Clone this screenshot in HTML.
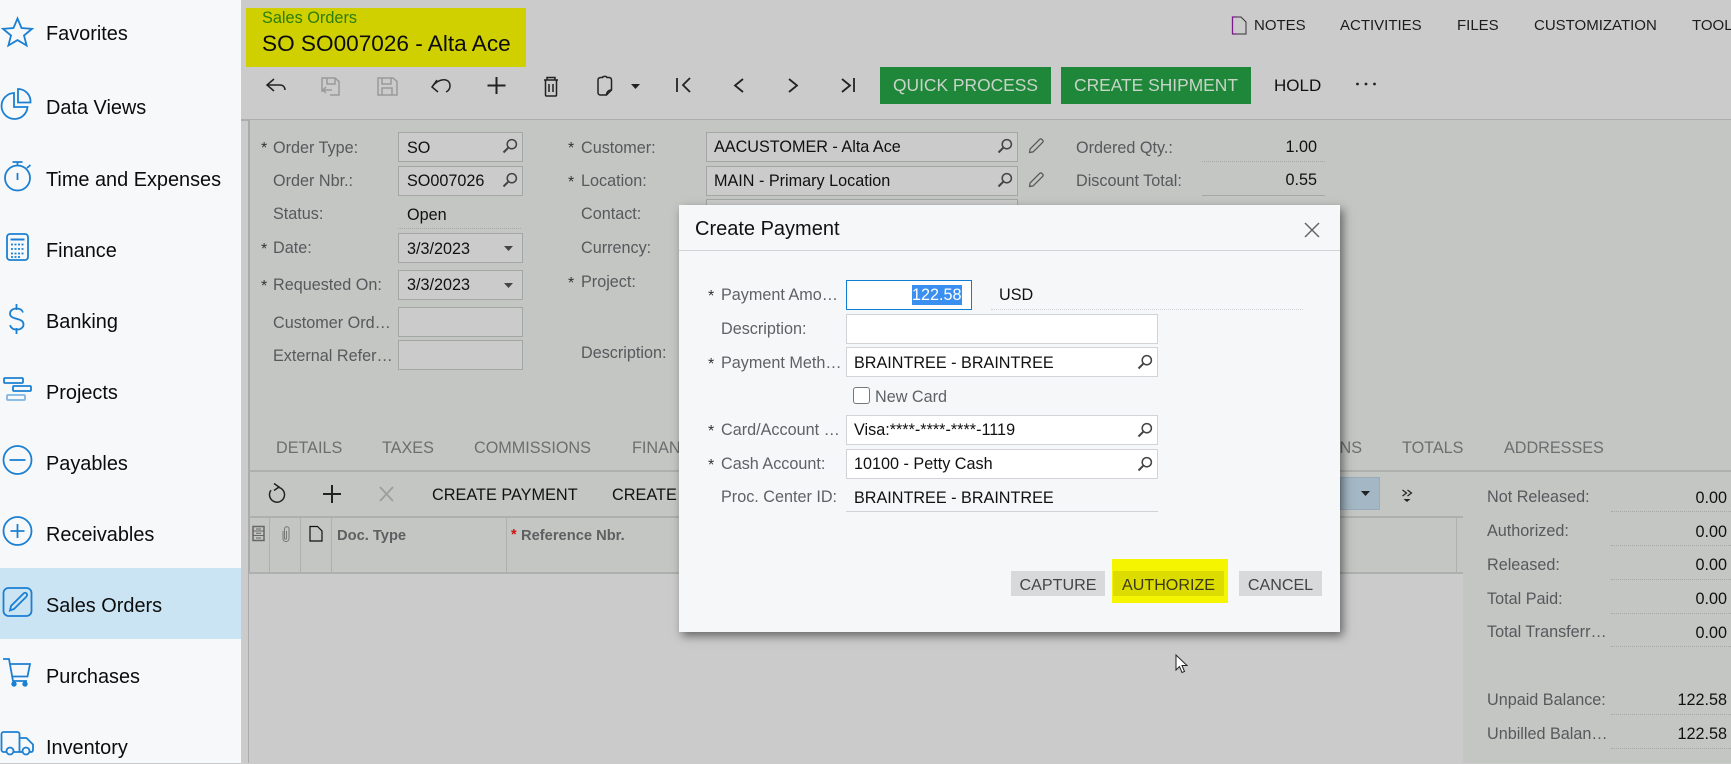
<!DOCTYPE html>
<html><head><meta charset="utf-8"><title>Sales Orders</title>
<style>
html,body{margin:0;padding:0}
body{width:1731px;height:763px;overflow:hidden;position:relative;background:#cbcbcb;font-family:"Liberation Sans",sans-serif;font-size:16.2px;color:#111}
.a{position:absolute}
.t{position:absolute;white-space:nowrap;line-height:20px;height:20px;margin-top:.5px}
.l{color:#56595b}
.s{color:#333;font-size:16px}
.t.n{font-size:19.9px;left:46px;color:#0c0c0c;margin-top:1.5px}
.t.top{font-size:15px;color:#1c1c1c;margin-top:1.5px}
.i{position:absolute;box-sizing:border-box;border:1.5px solid #a4a6a6;background:#cbcbcb;height:30px}
.d{position:absolute;box-sizing:border-box;border:1.5px solid #d2d3d6;background:#fff;height:30px}
.dot{position:absolute;border-top:1px dotted #a6a8a8;height:0}
.sol{position:absolute;border-top:1.5px solid #a6a8a8;height:0}
.tab{color:#6c6f6f;font-size:16.2px}
.r{text-align:right}
.btn{position:absolute;background:#d8d9da;color:#444;font-size:16.1px;text-align:center;line-height:28px;height:25px}
.g{position:absolute;background:#1f873a;color:#c8d4c8;font-size:17.4px;line-height:37px;height:37px;text-align:center}
svg{position:absolute;overflow:visible}
.ic{fill:none;stroke:#1b80d2;stroke-width:1.8}
.tb{fill:none;stroke:#222;stroke-width:1.5}
.dis{fill:none;stroke:#9a9a9a;stroke-width:1.5}
</style></head><body>
<svg width="0" height="0" style="position:absolute"><defs>
<symbol id="sr" viewBox="0 0 16 16"><circle cx="9.8" cy="6.2" r="4.6" fill="none" stroke="#444" stroke-width="1.5"/><path d="M6.4 9.6L1.5 14.5" stroke="#444" stroke-width="2" fill="none"/></symbol>
<symbol id="pen" viewBox="0 0 16 16"><path d="M1.5 14.5l.6-3.6L11.6 1.4c.7-.7 1.6-.7 2.3 0l.7.7c.7.7.7 1.6 0 2.3L5.1 13.9z" fill="none" stroke="#555" stroke-width="1.2"/></symbol>
</defs></svg>

<!-- sidebar -->
<div class="a" style="left:0;top:0;width:241px;height:763px;background:#f7f8fa"></div>
<div class="a" style="left:0;top:568px;width:241px;height:71px;background:#cbe4f4"></div>
<div class="t n" style="top:22px">Favorites</div>
<div class="t n" style="top:96.500px">Data Views</div>
<div class="t n" style="top:168px">Time and Expenses</div>
<div class="t n" style="top:239px">Finance</div>
<div class="t n" style="top:310px">Banking</div>
<div class="t n" style="top:381px">Projects</div>
<div class="t n" style="top:452px">Payables</div>
<div class="t n" style="top:523px">Receivables</div>
<div class="t n" style="top:594px">Sales Orders</div>
<div class="t n" style="top:665px">Purchases</div>
<div class="t n" style="top:736px">Inventory</div>
<svg width="241" height="763" style="left:0;top:0">
<g class="ic">
<path d="M17.5 18.5l4 9.5 10.5.8-8 6.7 2.6 10-9.1-5.4-9.1 5.4 2.6-10-8-6.7 10.5-.8z"/>
<path d="M14 93a13 13 0 1 0 13.5 14H14z"/><path d="M18 89a12.500 12.500 0 0 1 12.500 13.500H18z"/>
<circle cx="17.500" cy="178" r="12.500"/><path d="M12.500 162h10M17.500 162v3.500M17.500 173v7M27 168l3.500-3"/>
<rect x="7" y="234" width="21" height="26" rx="3"/><path d="M10.500 239.500h14" stroke-width="2"/><path d="M11 244.500h13M11 249h13M11 253.500h13M11 257h9" stroke-dasharray="2 1.500"/>
<path d="M23 312.500c-1-3-3.500-4-6.500-4-3.500 0-6.500 2-6.500 5 0 7 13.500 3.500 13.500 11 0 3-3 5.200-6.500 5.200-3.500 0-6-1.500-7-4.500M16.500 304v6M16.500 328v6"/>
<rect x="4" y="378" width="19" height="5" rx="1"/><rect x="13" y="386" width="18" height="5" rx="1"/><rect x="7" y="395" width="18" height="5" rx="1" stroke="#7fb5e3"/>
<circle cx="17.500" cy="460" r="14"/><path d="M9.500 460h16"/>
<circle cx="17.500" cy="531" r="14"/><path d="M10.500 531h14M17.500 524v14"/>
<rect x="3.500" y="588" width="28" height="28" rx="5"/><path d="M10 610.500l1-4.500 12.500-12.500c1-1 2.500-1 3.200.2.700 1 .5 2-.4 3L14 609z"/>
<path d="M3 659h6l4 22h14M10 664h20l-2.500 12.500H12.500"/><circle cx="14" cy="684" r="1.800" fill="#1b80d2"/><circle cx="25" cy="684" r="1.800" fill="#1b80d2"/>
<path d="M6 752H3.500c-1 0-2-1-2-2v-16c0-1 1-2 2-2h14c1 0 2 1 2 2v18M14 752h8M19.500 738h7l6.500 6.500V750c0 1.200-.8 2-2 2h-1"/><circle cx="10" cy="751" r="3.500"/><circle cx="26" cy="751" r="3.500"/>
</g></svg>

<!-- header -->
<div class="a" style="left:246px;top:8px;width:280px;height:59px;background:#d0d000"></div>
<div class="t" style="left:262px;top:7px;font-size:16.3px;color:#2b7d0c">Sales Orders</div>
<div class="t" style="left:262px;top:31px;font-size:22.6px;color:#0c0c0c;height:24px;line-height:24px">SO SO007026 - Alta Ace</div>

<svg width="20" height="20" style="left:1231px;top:15px"><path d="M1.500 2H10l5 5v12H1.500z" fill="none" stroke="#333" stroke-width="1"/><path d="M1.500 19V2h4" fill="none" stroke="#7d1a8c" stroke-width="1.300"/><path d="M1.500 19h4" fill="none" stroke="#7d1a8c" stroke-width="1.300"/></svg>
<div class="t top" style="left:1254px;top:14px">NOTES</div>
<div class="t top" style="left:1340px;top:14px">ACTIVITIES</div>
<div class="t top" style="left:1457px;top:14px">FILES</div>
<div class="t top" style="left:1534px;top:14px">CUSTOMIZATION</div>
<div class="t top" style="left:1692px;top:14px">TOOLS</div>

<svg width="900" height="40" style="left:240px;top:65px">
<g class="tb">
<path d="M34 14l-7 6 7 6"/><path d="M27 20h13c3 0 5 2 5 5"/>
</g>
<g class="dis"><path d="M84 26h-2v-13h13l4 3.500V30H90"/><path d="M87 13v6h8v-6"/><path d="M92 25h-9l3-3M83 25l3 3"/>
<path d="M138 13h15l4 3.500V30h-19z"/><path d="M142 13v6h9v-6M142 30v-7h10v7"/></g>
<g class="tb"><path d="M198 27L192 22L197 15"/><path d="M192 22C198 13 210 12 210 21C210 24 208 26 206 27"/>
<path d="M247.500 20.500h18M256.500 12v17" stroke-width="2"/>
<path d="M304 15h14M307 15v-2.500h8V15M305.500 15v15c0 .8.500 1 1 1h9c.5 0 1-.2 1-1V15M309 19v8M313 19v8"/>
<path d="M358 15c0-1.500 1-2.500 3-2.500h1.500c.5-1.500 4-1.500 4.500 0h2c1.500 0 2.500 1 2.500 2.500v10l-5 5h-6c-1.500 0-2.500-1-2.500-2.500z"/><path d="M366.500 30c0-3 2-5 5-5"/>
<path d="M437 13v14" stroke-width="1.800"/><path d="M450 13l-7 7 7 7" stroke-width="1.800"/>
<path d="M503 14l-8 6.500 8 6.500" stroke-width="1.800"/><path d="M549 14l8 6.500-8 6.500" stroke-width="1.800"/>
<path d="M602 14l8 6.500-8 6.500" stroke-width="1.800"/><path d="M614 13v14" stroke-width="1.800"/>
</g>
<path d="M391 19h9l-4.500 5z" fill="#222"/>
</svg>

<div class="g" style="left:880px;top:67px;width:171px">QUICK PROCESS</div>
<div class="g" style="left:1061px;top:67px;width:190px">CREATE SHIPMENT</div>
<div class="t" style="left:1274px;top:75px;font-size:17px;color:#111">HOLD</div>
<svg width="30" height="6" style="left:1354px;top:81px"><circle cx="3.500" cy="3" r="1.400" fill="#222"/><circle cx="12" cy="3" r="1.400" fill="#222"/><circle cx="20.500" cy="3" r="1.400" fill="#222"/></svg>

<!-- form panel -->
<div class="a" style="left:241px;top:119px;width:1490px;height:1.500px;background:#aeaeae"></div>
<div class="a" style="left:248px;top:120px;width:1483px;height:453px;background:#c4c6c4"></div>
<div class="a" style="left:1463px;top:470px;width:268px;height:293px;background:#c4c6c4"></div>
<div class="a" style="left:248px;top:120px;width:1.500px;height:643px;background:#aaa"></div>

<!-- left col -->
<div class="t s" style="left:261px;top:138px">*</div><div class="t l" style="left:273px;top:137px">Order Type:</div>
<div class="i" style="left:398px;top:132px;width:125px"></div><div class="t" style="left:407px;top:137px">SO</div>
<svg width="16" height="16" style="left:502px;top:138px"><use href="#sr"/></svg>
<div class="t l" style="left:273px;top:170px">Order Nbr.:</div>
<div class="i" style="left:398px;top:166px;width:125px"></div><div class="t" style="left:407px;top:170px">SO007026</div>
<svg width="16" height="16" style="left:502px;top:172px"><use href="#sr"/></svg>
<div class="t l" style="left:273px;top:203px">Status:</div><div class="t" style="left:407px;top:204px">Open</div>
<div class="dot" style="left:398px;top:228px;width:123px"></div>
<div class="t s" style="left:261px;top:239px">*</div><div class="t l" style="left:273px;top:237px">Date:</div>
<div class="i" style="left:398px;top:233px;width:125px"></div><div class="t" style="left:407px;top:238px">3/3/2023</div>
<svg width="10" height="6" style="left:504px;top:246px"><path d="M0 0h9l-4.500 5z" fill="#444"/></svg>
<div class="t s" style="left:261px;top:276px">*</div><div class="t l" style="left:273px;top:274px">Requested On:</div>
<div class="i" style="left:398px;top:270px;width:125px"></div><div class="t" style="left:407px;top:274px">3/3/2023</div>
<svg width="10" height="6" style="left:504px;top:283px"><path d="M0 0h9l-4.500 5z" fill="#444"/></svg>
<div class="t l" style="left:273px;top:312px">Customer Ord…</div><div class="i" style="left:398px;top:307px;width:125px"></div>
<div class="t l" style="left:273px;top:345px">External Refer…</div><div class="i" style="left:398px;top:340px;width:125px"></div>

<!-- middle col -->
<div class="t s" style="left:568px;top:138px">*</div><div class="t l" style="left:581px;top:137px">Customer:</div>
<div class="i" style="left:706px;top:132px;width:312px"></div><div class="t" style="left:714px;top:136px">AACUSTOMER - Alta Ace</div>
<svg width="16" height="16" style="left:997px;top:138px"><use href="#sr"/></svg>
<svg width="16" height="16" style="left:1028px;top:138px"><use href="#pen"/></svg>
<div class="t s" style="left:568px;top:172px">*</div><div class="t l" style="left:581px;top:170px">Location:</div>
<div class="i" style="left:706px;top:166px;width:312px"></div><div class="t" style="left:714px;top:170px">MAIN - Primary Location</div>
<svg width="16" height="16" style="left:997px;top:172px"><use href="#sr"/></svg>
<svg width="16" height="16" style="left:1028px;top:172px"><use href="#pen"/></svg>
<div class="i" style="left:706px;top:199px;width:312px"></div>
<div class="t l" style="left:581px;top:203px">Contact:</div>
<div class="t l" style="left:581px;top:237px">Currency:</div>
<div class="t s" style="left:568px;top:273px">*</div><div class="t l" style="left:581px;top:271px">Project:</div>
<div class="t l" style="left:581px;top:342px">Description:</div>

<!-- right col -->
<div class="t l" style="left:1076px;top:137px">Ordered Qty.:</div><div class="t r" style="left:1217px;width:100px;top:136px">1.00</div>
<div class="dot" style="left:1202px;top:161px;width:123px"></div>
<div class="t l" style="left:1076px;top:170px">Discount Total:</div><div class="t r" style="left:1217px;width:100px;top:169.500px">0.55</div>
<div class="sol" style="left:1202px;top:195px;width:123px"></div>

<!-- tabs -->
<div class="t tab" style="left:276px;top:437px">DETAILS</div>
<div class="t tab" style="left:382px;top:437px">TAXES</div>
<div class="t tab" style="left:474px;top:437px">COMMISSIONS</div>
<div class="t tab" style="left:632px;top:437px">FINANCIAL</div>
<div class="t tab r" style="left:1262px;width:100px;top:437px">OPTIONS</div>
<div class="t tab" style="left:1402px;top:437px">TOTALS</div>
<div class="t tab" style="left:1504px;top:437px">ADDRESSES</div>
<div class="a" style="left:249px;top:470px;width:1482px;height:1.500px;background:#aeb0b0"></div>

<!-- grid toolbar -->
<svg width="170" height="30" style="left:260px;top:479px">
<path d="M14 4.500l5 3.500-5 3.500" class="tb"/><path d="M17.500 8.200a7.500 7.500 0 1 1-6.500 3" class="tb"/>
<path d="M63 15h18M72 6v18" stroke="#222" stroke-width="2" fill="none"/>
<path d="M120 8l13 14M133 8l-13 14" stroke="#9d9d9d" stroke-width="1.800" fill="none"/>
</svg>
<div class="t" style="left:432px;top:484px;font-size:16.300px;color:#111">CREATE PAYMENT</div>
<div class="t" style="left:612px;top:484px;font-size:16.300px;color:#111">CREATE</div>
<div class="a" style="left:1340px;top:477px;width:40px;height:33px;background:#a3b8c4;box-sizing:border-box;border:1px solid #9ab"></div>
<svg width="10" height="6" style="left:1361px;top:491px"><path d="M0 0h9l-4.500 5z" fill="#222"/></svg>
<svg width="14" height="16" style="left:1401px;top:488px"><path d="M1.500 2l4 3-4 3M6.500 2l4 3-4 3" fill="none" stroke="#222" stroke-width="1.200"/><path d="M2.500 11h7l-3.500 3z" fill="#222"/></svg>
<div class="a" style="left:249px;top:516px;width:1214px;height:1.500px;background:#aeb0b0"></div>
<div class="a" style="left:249px;top:572px;width:1214px;height:1.500px;background:#aeb0b0"></div>
<div class="a" style="left:249px;top:573.500px;width:1214px;height:190px;background:#cbcbcb"></div>
<div class="a" style="left:269px;top:517px;width:1px;height:55px;background:#aeb0b0"></div>
<div class="a" style="left:300px;top:517px;width:1px;height:55px;background:#aeb0b0"></div>
<div class="a" style="left:331px;top:517px;width:1px;height:55px;background:#aeb0b0"></div>
<div class="a" style="left:506px;top:517px;width:1px;height:55px;background:#aeb0b0"></div>
<div class="a" style="left:1456px;top:517px;width:1px;height:55px;background:#aeb0b0"></div>
<svg width="100" height="20" style="left:250px;top:525px">
<rect x="3" y="1.500" width="11" height="14" fill="none" stroke="#666" stroke-width="1.500"/><path d="M3 6h11M3 10.500h11M6 4h5M6 8.200h5M6 13h5" stroke="#666" stroke-width="1" fill="none"/>
<path d="M33 6v7.500c0 4 6 4 6 0V4c0-3-4.500-3-4.500 0v9c0 1.500 2 1.500 2 0V6" fill="none" stroke="#777" stroke-width="1"/>
<path d="M60 1.500h7.500l4.500 4.500v10h-12z" fill="none" stroke="#111" stroke-width="1.200"/>
</svg>
<div class="t" style="left:337px;top:525px;font-weight:bold;font-size:14.700px;color:#5e5f60">Doc. Type</div>
<div class="t" style="left:511px;top:524px;font-weight:bold;color:#d01010;font-size:14.500px">*</div>
<div class="t" style="left:521px;top:525px;font-weight:bold;font-size:14.700px;color:#5e5f60">Reference Nbr.</div>

<!-- right summary -->
<div class="t l" style="left:1487px;top:486px">Not Released:</div><div class="t r" style="left:1627px;width:100px;top:487px">0.00</div><div class="dot" style="left:1611px;top:511px;width:120px"></div>
<div class="t l" style="left:1487px;top:520px">Authorized:</div><div class="t r" style="left:1627px;width:100px;top:521px">0.00</div><div class="dot" style="left:1611px;top:545px;width:120px"></div>
<div class="t l" style="left:1487px;top:554px">Released:</div><div class="t r" style="left:1627px;width:100px;top:554px">0.00</div><div class="dot" style="left:1611px;top:579px;width:120px"></div>
<div class="t l" style="left:1487px;top:588px">Total Paid:</div><div class="t r" style="left:1627px;width:100px;top:588px">0.00</div><div class="dot" style="left:1611px;top:613px;width:120px"></div>
<div class="t l" style="left:1487px;top:621px">Total Transferr…</div><div class="t r" style="left:1627px;width:100px;top:622px">0.00</div><div class="dot" style="left:1611px;top:646px;width:120px"></div>
<div class="t l" style="left:1487px;top:689px">Unpaid Balance:</div><div class="t r" style="left:1627px;width:100px;top:689px">122.58</div><div class="dot" style="left:1611px;top:714px;width:120px"></div>
<div class="t l" style="left:1487px;top:723px">Unbilled Balan…</div><div class="t r" style="left:1627px;width:100px;top:723px">122.58</div><div class="dot" style="left:1611px;top:748px;width:120px"></div>

<!-- dialog -->
<div class="a" style="left:679px;top:205px;width:661px;height:427px;background:#f6f7f9;box-shadow:3px 4px 9px rgba(0,0,0,.5);border:0"></div>
<div class="t" style="left:695px;top:218px;font-size:20px;color:#111">Create Payment</div>
<svg width="16" height="16" style="left:1304px;top:222px"><path d="M1 1l14 14M15 1L1 15" stroke="#666" stroke-width="1.500" fill="none"/></svg>
<div class="a" style="left:679px;top:250px;width:661px;height:1px;background:#d0d2d6"></div>

<div class="t s" style="left:708px;top:286px">*</div><div class="t l" style="left:721px;top:284px;color:#5e6264">Payment Amo…</div>
<div class="a" style="left:846px;top:280px;width:126px;height:30px;box-sizing:border-box;border:1.500px solid #0f7fd6;background:#fff"></div>
<div class="a" style="left:912px;top:285px;width:50px;height:20px;background:#3b8ff0"></div>
<div class="t" style="left:912px;top:284px;color:#fff">122.58</div>
<div class="t" style="left:999px;top:284px">USD</div>
<div class="dot" style="left:991px;top:309px;width:312px;border-color:#d0d2d6"></div>
<div class="t l" style="left:721px;top:318px;color:#5e6264">Description:</div>
<div class="d" style="left:846px;top:314px;width:312px"></div>
<div class="t s" style="left:708px;top:354px">*</div><div class="t l" style="left:721px;top:352px;color:#5e6264">Payment Meth…</div>
<div class="d" style="left:846px;top:347px;width:312px"></div><div class="t" style="left:854px;top:352px">BRAINTREE - BRAINTREE</div>
<svg width="16" height="16" style="left:1137px;top:354px"><use href="#sr"/></svg>
<div class="a" style="left:853px;top:387px;width:17px;height:17px;box-sizing:border-box;border:1.500px solid #777;border-radius:3px;background:#fff"></div>
<div class="t l" style="left:875px;top:386px;color:#5e6264">New Card</div>
<div class="t s" style="left:708px;top:421px">*</div><div class="t l" style="left:721px;top:419px;color:#5e6264">Card/Account …</div>
<div class="d" style="left:846px;top:415px;width:312px"></div><div class="t" style="left:854px;top:419px">Visa:****-****-****-1119</div>
<svg width="16" height="16" style="left:1137px;top:422px"><use href="#sr"/></svg>
<div class="t s" style="left:708px;top:455px">*</div><div class="t l" style="left:721px;top:453px;color:#5e6264">Cash Account:</div>
<div class="d" style="left:846px;top:449px;width:312px"></div><div class="t" style="left:854px;top:453px">10100 - Petty Cash</div>
<svg width="16" height="16" style="left:1137px;top:456px"><use href="#sr"/></svg>
<div class="t l" style="left:721px;top:486px;color:#5e6264">Proc. Center ID:</div><div class="t" style="left:854px;top:487px">BRAINTREE - BRAINTREE</div>
<div class="a" style="left:846px;top:511px;width:312px;height:1px;background:#d0d2d6"></div>

<div class="btn" style="left:1011px;top:571px;width:94px">CAPTURE</div>
<div class="a" style="left:1112px;top:559px;width:116px;height:44px;background:#f5f500"></div>
<div class="btn" style="left:1113px;top:571px;width:111px;background:#dcdc00;color:#3a3a1a">AUTHORIZE</div>
<div class="btn" style="left:1239px;top:571px;width:83px">CANCEL</div>

<!-- cursor -->
<svg width="14" height="22" style="left:1175px;top:654px"><path d="M1 1v15l3.500-3.500 2.500 6 2.500-1-2.500-6H12z" fill="#fff" stroke="#222" stroke-width="1"/></svg>
</body></html>
